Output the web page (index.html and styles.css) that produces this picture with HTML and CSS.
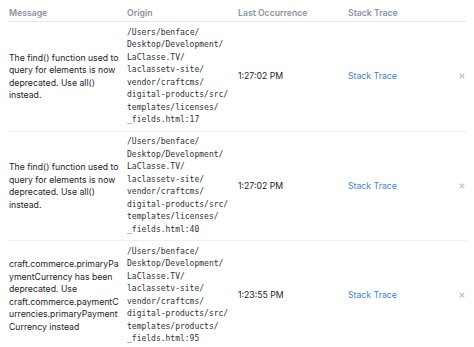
FILE: index.html
```html
<!DOCTYPE html>
<html lang="en">
<head>
    <meta charset="UTF-8">
    <title>Deprecation Warnings</title>
    <link rel="stylesheet" href="styles.css">
</head>
<body>
<table class="data">
    <colgroup>
        <col class="col-message">
        <col class="col-origin">
        <col class="col-time">
        <col class="col-trace">
        <col class="col-remove">
    </colgroup>
    <thead>
        <tr>
            <th>Message</th>
            <th>Origin</th>
            <th>Last Occurrence</th>
            <th>Stack Trace</th>
            <th></th>
        </tr>
    </thead>
    <tbody>
        <tr>
            <td class="message">The find() function used to query for elements is now deprecated. Use all() instead.</td>
            <td class="origin"><code>/<wbr>Users/<wbr>benface/<wbr>Desktop/<wbr>Development/<wbr>LaClasse.TV/<wbr>laclassetv-site/<wbr>vendor/<wbr>craftcms/<wbr>digital-products/<wbr>src/<wbr>templates/<wbr>licenses/<wbr>_fields.html:17</code></td>
            <td>1:27:02 PM</td>
            <td><a href="#">Stack Trace</a></td>
            <td class="remove">
                <svg viewBox="0 0 6 6" width="6" height="6"><path d="M0.8 0.8 5.2 5.2 M5.2 0.8 0.8 5.2" /></svg>
            </td>
        </tr>
        <tr>
            <td class="message">The find() function used to query for elements is now deprecated. Use all() instead.</td>
            <td class="origin"><code>/<wbr>Users/<wbr>benface/<wbr>Desktop/<wbr>Development/<wbr>LaClasse.TV/<wbr>laclassetv-site/<wbr>vendor/<wbr>craftcms/<wbr>digital-products/<wbr>src/<wbr>templates/<wbr>licenses/<wbr>_fields.html:40</code></td>
            <td>1:27:02 PM</td>
            <td><a href="#">Stack Trace</a></td>
            <td class="remove">
                <svg viewBox="0 0 6 6" width="6" height="6"><path d="M0.8 0.8 5.2 5.2 M5.2 0.8 0.8 5.2" /></svg>
            </td>
        </tr>
        <tr>
            <td class="message">craft.commerce.primaryPaymentCurrency has been deprecated. Use craft.commerce.paymentCurrencies.primaryPaymentCurrency instead</td>
            <td class="origin"><code>/<wbr>Users/<wbr>benface/<wbr>Desktop/<wbr>Development/<wbr>LaClasse.TV/<wbr>laclassetv-site/<wbr>vendor/<wbr>craftcms/<wbr>digital-products/<wbr>src/<wbr>templates/<wbr>products/<wbr>_fields.html:95</code></td>
            <td>1:23:55 PM</td>
            <td><a href="#">Stack Trace</a></td>
            <td class="remove">
                <svg viewBox="0 0 6 6" width="6" height="6"><path d="M0.8 0.8 5.2 5.2 M5.2 0.8 0.8 5.2" /></svg>
            </td>
        </tr>
    </tbody>
</table>
</body>
</html>
```

FILE: styles.css
```css
body {
    margin: 0;
    padding: 0 7px 0 8px;
    background: #fff;
    color: #1d2329;
    font-family: Inter, "Liberation Sans", sans-serif;
    font-size: 8.7px;
    line-height: 12.5px;
}

table.data {
    width: 459px;
    table-layout: fixed;
    border-collapse: collapse;
}

.col-message { width: 118px; }
.col-origin { width: 111px; }
.col-time { width: 110px; }
.col-trace { width: 108px; }
.col-remove { width: 12px; }

.data th,
.data td {
    padding: 4.5px 7px 4px 1px;
    text-align: left;
    vertical-align: middle;
}

.data th {
    padding-top: 7px;
    padding-bottom: 1.5px;
    font-weight: 600;
    color: #8a939e;
    border-bottom: 1px solid #e6e9ec;
}

.data tbody tr + tr td {
    border-top: 1px solid #eff1f3;
}

.data td.message {
    overflow-wrap: anywhere;
}

.data td.origin code {
    font-family: "DejaVu Sans Mono", "Liberation Mono", monospace;
    font-size: 8px;
    line-height: 12.5px;
    color: #2b323a;
    display: block;
}

.data a {
    color: #3b82d6;
    text-decoration: none;
}

.data td.remove {
    padding: 0 0 0 4px;
    text-align: left;
}

.remove svg {
    display: block;
    fill: none;
    stroke: #c4c8cd;
    stroke-width: 1.5;
}
```
